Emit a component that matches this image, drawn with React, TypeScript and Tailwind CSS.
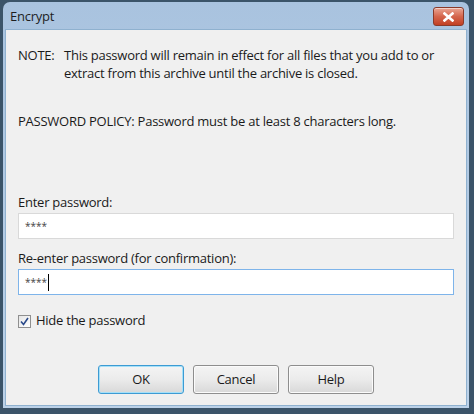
import React from 'react';

function CloseButton() {
  return (
    <div className="w-[31px] h-[19px] rounded-[3px] border border-[#8a3a2a] bg-gradient-to-b from-[#e9a593] via-[#d4654c] to-[#c23f22] flex items-center justify-center shadow-[inset_0_1px_0_rgba(255,255,255,0.5)]">
      <svg width="11" height="10" viewBox="0 0 11 10">
        <path d="M1.5 1.5 L9.5 8.5 M9.5 1.5 L1.5 8.5" stroke="#ffffff" strokeWidth="2.6" strokeLinecap="square" />
      </svg>
    </div>
  );
}

function Field({ label, value, focused }: { label: string; value: string; focused?: boolean }) {
  return (
    <div className="flex flex-col">
      <div className="h-[20px] leading-[20px] text-[#1a1a1a]">{label}</div>
      <div
        className={
          'mt-[1px] h-[26px] w-[436px] bg-white border flex items-center pl-[6px] ' +
          (focused ? 'border-[#7eb4ea]' : 'border-[#d9d9d9]')
        }
      >
        <span className="text-[10px] tracking-[0px] text-[#444] leading-none">{value}</span>
        {focused && <span className="w-px h-[17px] bg-black ml-[1px]" />}
      </div>
    </div>
  );
}

function Button({ label, isDefault }: { label: string; isDefault?: boolean }) {
  return (
    <div
      className={
        'w-[86px] h-[29px] rounded-[3px] border flex items-center justify-center text-[#1a1a1a] bg-gradient-to-b from-[#f4f4f4] via-[#ebebeb] to-[#d8d8d8] ' +
        (isDefault ? 'border-[#3d9bd3] shadow-[inset_0_0_0_1px_#a6e0f8]' : 'border-[#8e8e8e] shadow-[inset_0_0_0_1px_#fbfbfb]')
      }
    >
      {label}
    </div>
  );
}

export default function App() {
  return (
    <div
      className="w-[474px] h-[414px] bg-[#3b5469] pt-[2px] pl-[3px] pr-[5px] pb-[6px] text-[13px] tracking-[-0.25px]"
      style={{ fontFamily: '"Open Sans", "Noto Sans", sans-serif' }}
    >
      <div className="w-full h-full rounded-t-[7px] bg-gradient-to-b from-[#a9c3df] to-[#bcd2e9] flex flex-col px-[2px] pb-[2px]">
        {/* Title bar */}
        <div className="h-[27px] flex items-center justify-between pl-[5px] pr-[3px]">
          <span className="text-[13px] text-[#1e1e1e] pt-[2px]">Encrypt</span>
          <div className="mt-[2px]">
            <CloseButton />
          </div>
        </div>

        {/* Client area */}
        <div className="flex-1 bg-[#f0f0f0] border border-[#8fb1cf] flex flex-col pl-[12px] pt-[16px]">
          <div className="flex text-[#1a1a1a] leading-[18px]">
            <span className="w-[46px] shrink-0">NOTE:</span>
            <span className="whitespace-nowrap">
              This password will remain in effect for all files that you add to or
              <br />
              extract from this archive until the archive is closed.
            </span>
          </div>

          <div className="mt-[30px] leading-[18px] text-[#1a1a1a]">
            PASSWORD POLICY: Password must be at least 8 characters long.
          </div>

          <div className="mt-[62px] flex flex-col gap-[9px]">
            <Field label="Enter password:" value="****" />
            <Field label="Re-enter password (for confirmation):" value="****" focused />
          </div>

          <label className="mt-[17px] h-[18px] flex items-center gap-[5px] text-[#1a1a1a]">
            <span className="w-[13px] h-[13px] border border-[#8f8f8f] bg-gradient-to-br from-[#e6e6e6] to-[#ffffff] flex items-center justify-center">
              <svg width="9" height="9" viewBox="0 0 9 9">
                <path d="M1 4.5 L3.5 7.5 L8 1" stroke="#2a4a8a" strokeWidth="1.6" fill="none" />
              </svg>
            </span>
            <span>Hide the password</span>
          </label>

          <div className="mt-[35px] flex gap-[9px] pl-[80px]">
            <Button label="OK" isDefault />
            <Button label="Cancel" />
            <Button label="Help" />
          </div>
        </div>
      </div>
    </div>
  );
}
